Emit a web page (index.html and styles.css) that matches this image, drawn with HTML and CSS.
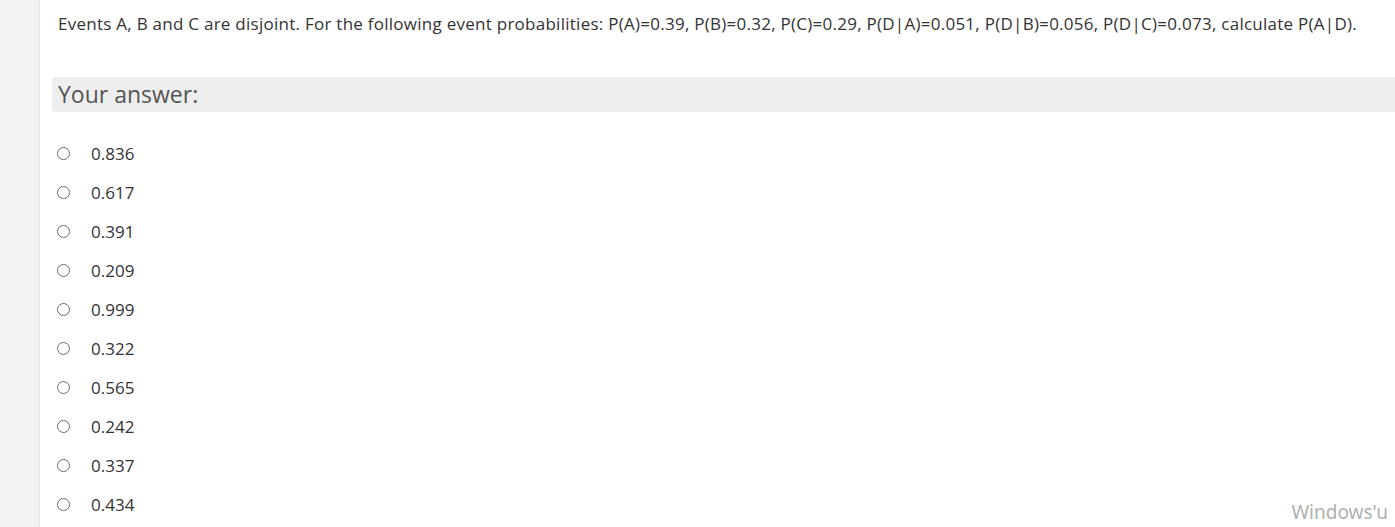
FILE: index.html
```html
<!DOCTYPE html>
<html lang="en">
<head>
    <meta charset="UTF-8">
    <title>Question</title>
    <link rel="stylesheet" href="styles.css">
</head>
<body>
    <div class="side"></div>
    <div class="main">
        <p class="question">Events A, B and C are disjoint. For the following event probabilities: P(A)=0.39, P(B)=0.32, P(C)=0.29, P(D|A)=0.051, P(D|B)=0.056, P(D|C)=0.073, calculate P(A|D).</p>

        <div class="answer-head">Your answer:</div>

        <ul class="options">
            <li><span class="radio"></span>0.836</li>
            <li><span class="radio"></span>0.617</li>
            <li><span class="radio"></span>0.391</li>
            <li><span class="radio"></span>0.209</li>
            <li><span class="radio"></span>0.999</li>
            <li><span class="radio"></span>0.322</li>
            <li><span class="radio"></span>0.565</li>
            <li><span class="radio"></span>0.242</li>
            <li><span class="radio"></span>0.337</li>
            <li><span class="radio"></span>0.434</li>
        </ul>
    </div>
    <div class="watermark">Windows'u</div>
</body>
</html>
```

FILE: styles.css
```css
body {
    margin: 0;
    font-family: "Open Sans", Arial, sans-serif;
    background-color: #fff;
    color: #333;
    display: flex;
    min-height: 527px;
    overflow: hidden;
}
.side {
    width: 39px;
    flex-shrink: 0;
    background-color: #f2f2f2;
    border-right: 1px solid #e6e6e6;
}
.main {
    flex: 1;
    padding-left: 12px;
}
.question {
    margin: 11px 0 0 6px;
    font-size: 17px;
    line-height: 26px;
    letter-spacing: 0.26px;
    color: #333;
}
.answer-head {
    margin-top: 40px;
    background-color: #eee;
    border-radius: 4px 0 0 4px;
    height: 35px;
    line-height: 35px;
    padding-left: 6px;
    font-size: 23px;
    color: #555;
}
.options {
    list-style: none;
    margin: 22px 0 0 0;
    padding: 0;
}
.options li {
    display: flex;
    align-items: center;
    height: 39px;
    font-size: 17px;
    color: #333;
}
.radio {
    width: 11px;
    height: 11px;
    border: 1.5px solid #6e6e6e;
    border-radius: 50%;
    margin-left: 5px;
    margin-right: 21px;
}
.watermark {
    position: absolute;
    right: 7px;
    bottom: 2px;
    font-family: "Noto Sans", sans-serif;
    font-size: 19px;
    color: #b0b0b0;
}
```
